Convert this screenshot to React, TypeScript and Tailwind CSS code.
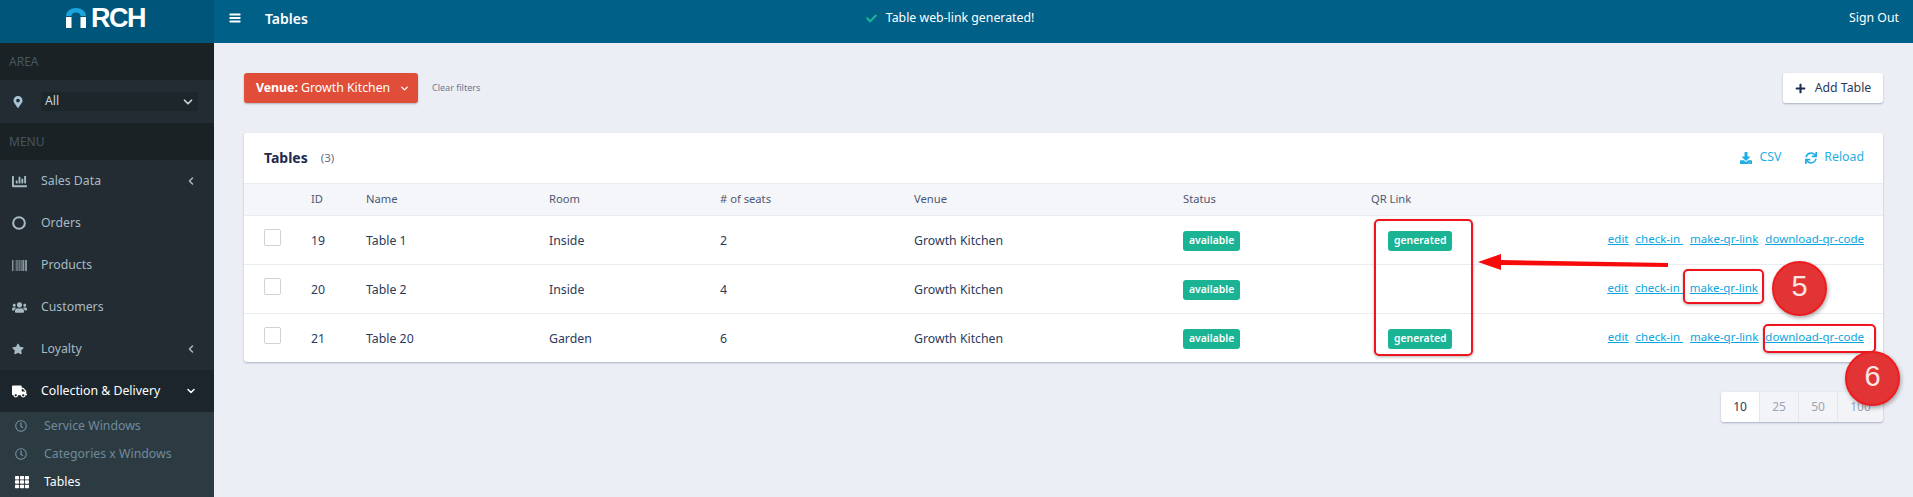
import React from "react";
import { FaMapMarkerAlt, FaChartBar, FaBarcode, FaUsers, FaStar, FaTruck, FaRegClock, FaTh, FaPlus, FaDownload, FaSync, FaCheck } from "react-icons/fa";
import { LuChevronDown, LuChevronLeft, LuCircle, LuMenu } from "react-icons/lu";

const font = "font-['Noto_Sans','Open_Sans',sans-serif]";

function Side({ icon, label, chev, active }: { icon: React.ReactNode; label: string; chev?: "left" | "down"; active?: boolean }) {
  return (
    <div className={`flex h-[42px] items-center pl-3 pr-[17px] text-[12.3px] ${active ? "bg-[#1c252b] text-white" : "text-[#a7bbc6]"}`}>
      <span className="flex w-[29px] shrink-0 items-center text-[15px]">{icon}</span>
      <span className="flex-1">{label}</span>
      {chev === "left" && <LuChevronLeft className="text-[12px]" strokeWidth={3} />}
      {chev === "down" && <LuChevronDown className="text-[12px]" strokeWidth={3} />}
    </div>
  );
}

function Sub({ icon, label, active }: { icon: React.ReactNode; label: string; active?: boolean }) {
  return (
    <div className={`flex h-[28px] items-center pl-[15px] text-[12.3px] ${active ? "text-white" : "text-[#6f8b9a]"}`}>
      <span className="flex w-[29px] shrink-0 items-center text-[12px]">{icon}</span>
      {label}
    </div>
  );
}

const Badge = ({ t }: { t: string }) => (
  <span className="inline-flex h-5 items-center rounded-[3px] bg-[#1ab394] px-[6px] text-[10.4px] font-semibold text-white">{t}</span>
);

const rows = [
  { id: "19", name: "Table 1", room: "Inside", seats: "2", qr: true },
  { id: "20", name: "Table 2", room: "Inside", seats: "4", qr: false },
  { id: "21", name: "Table 20", room: "Garden", seats: "6", qr: true },
];

const grid = "grid grid-cols-[47px_55px_183px_171px_194px_269px_188px_1fr] items-center";

const box = "absolute rounded-[5px] border-2 border-[#f0141e] shadow-[0_1px_3px_rgba(0,0,0,0.3)]";
const dot = "absolute flex h-[55px] w-[55px] items-center justify-center rounded-full border-2 border-[#ee1c20] bg-[#e23434] pb-[4px] font-['Liberation_Sans',sans-serif] text-[29px] text-[#fbe6e6] shadow-[1px_2px_4px_rgba(0,0,0,0.35)]";

function Annotations() {
  return (
    <>
      <div className={`${box} left-[1374px] top-[219px] h-[137px] w-[99px]`} />
      <div className={`${box} left-[1683px] top-[269px] h-[35px] w-[81px]`} />
      <div className={`${box} left-[1763px] top-[324px] h-[29px] w-[113px]`} />
      <svg className="absolute left-[1470px] top-[245px]" width="200" height="32" viewBox="0 0 200 32">
        <path d="M8 17 L31 9 L31 15 L198 18 L198 22 L31 20 L31 25 Z" fill="#f60a0a" />
      </svg>
      <div className={`${dot} left-[1772px] top-[261px]`}>5</div>
      <div className={`${dot} left-[1845px] top-[351px]`}>6</div>
    </>
  );
}

export default function App() {
  return (
    <div className={`${font} relative flex h-[497px] w-[1913px] overflow-hidden bg-[#ebeef4] text-[12.3px] text-[#2b3a5c]`}>
      <aside className="flex w-[214px] shrink-0 flex-col bg-[#222c32]">
        <div className="flex h-[43px] items-center bg-[#00557a] pb-[7px] pl-[66px]">
          <svg width="21" height="20" viewBox="0 0 21 20" className="mr-[4px]">
            <path d="M0 8 A10 8 0 0 1 20 8 L14.5 8 A4.5 3.5 0 0 0 5.5 8 Z" fill="#1aa5dc" />
            <rect x="0" y="9" width="5.5" height="11" fill="#fff" />
            <rect x="14.5" y="9" width="5.5" height="11" fill="#fff" />
          </svg>
          <span className="font-['Liberation_Sans',sans-serif] text-[27px] font-bold leading-none tracking-[-1.5px] text-white">RCH</span>
        </div>
        <div className="flex h-[37px] items-center bg-[#1b2226] px-[9px] text-[12px] text-[#46565f]">AREA</div>
        <div className="flex h-[43px] items-center pl-3 pr-4">
          <span className="flex w-[29px] text-[12px] text-[#a7c4d2]"><FaMapMarkerAlt /></span>
          <div className="flex h-[19px] flex-1 items-center justify-between bg-[#1d262b] pl-1 pr-[3px] text-[12.3px] text-[#c9d6dd]">
            All
            <LuChevronDown className="text-[14px]" strokeWidth={3} />
          </div>
        </div>
        <div className="flex h-[37px] items-center bg-[#1b2226] px-[9px] text-[12px] text-[#46565f]">MENU</div>
        <Side icon={<FaChartBar />} label="Sales Data" chev="left" />
        <Side icon={<LuCircle strokeWidth={3.5} className="text-[14px]" />} label="Orders" />
        <Side icon={<FaBarcode />} label="Products" />
        <Side icon={<FaUsers />} label="Customers" />
        <Side icon={<FaStar className="text-[12px]" />} label="Loyalty" chev="left" />
        <Side icon={<FaTruck />} label="Collection & Delivery" chev="down" active />
        <div className="flex-1 bg-[#2c3a42]">
          <Sub icon={<FaRegClock />} label="Service Windows" />
          <Sub icon={<FaRegClock />} label="Categories x Windows" />
          <Sub icon={<FaTh className="text-[14px]" />} label="Tables" active />
        </div>
      </aside>

      <main className="flex min-w-0 flex-1 flex-col">
        <header className="flex h-[43px] shrink-0 items-center bg-[#006088] pb-[7px] pl-[14px] pr-[14px] text-white">
          <LuMenu className="text-[14px]" strokeWidth={3.5} />
          <span className="ml-[23px] text-[14px] font-semibold">Tables</span>
          <div className="ml-[558px] flex items-center gap-[9px]">
            <FaCheck className="text-[11px] text-[#1ab394]" />
            <span>Table web-link generated!</span>
          </div>
          <span className="ml-auto">Sign Out</span>
        </header>

        <div className="px-[30px] pt-[30px]">
          <div className="flex h-[30px] items-center justify-between">
            <div className="flex items-center gap-[14px]">
              <div className="flex h-[30px] w-[174px] items-center gap-[9px] rounded-[3px] bg-[#e04e3a] pl-3 text-white shadow-[0_1px_2px_rgba(0,0,0,0.25)]">
                <span><b className="font-bold">Venue:</b> Growth Kitchen</span>
                <LuChevronDown className="text-[11px]" strokeWidth={3} />
              </div>
              <span className="text-[9px] text-[#6b7a90]">Clear filters</span>
            </div>
            <div className="flex h-[30px] w-[100px] items-center justify-center gap-[9px] rounded-[3px] bg-white shadow-[0_1px_2px_rgba(40,60,100,0.35)]">
              <FaPlus className="text-[11px] text-[#1e2d55]" />
              <span>Add Table</span>
            </div>
          </div>

          <section className="mt-[30px] rounded-[3px] bg-white shadow-[0_1px_2px_rgba(40,60,100,0.35)]">
            <div className="flex h-[50px] items-center justify-between pb-[1px] pl-5 pr-[19px]">
              <div className="flex items-center gap-[13px]">
                <span className="text-[14px] font-bold text-[#1e2a50]">Tables</span>
                <span className="text-[11.5px] text-[#5f6d85]">(3)</span>
              </div>
              <div className="flex items-center gap-[24px] text-[#1faee3]">
                <span className="flex items-center gap-[7px]"><FaDownload className="text-[12px]" />CSV</span>
                <span className="flex items-center gap-[7px]"><FaSync className="text-[12px]" />Reload</span>
              </div>
            </div>
            <div className={`${grid} h-[33px] border-y border-[#e9ecf1] bg-[#f5f6f9] pl-[20px] text-[11.2px] text-[#4a5873]`}>
              <span />
              <span>ID</span>
              <span>Name</span>
              <span>Room</span>
              <span># of seats</span>
              <span>Venue</span>
              <span>Status</span>
              <span>QR Link</span>
            </div>
            {rows.map((r, i) => (
              <div key={r.id} className={`${grid} pl-[20px] pt-[2px] ${i < 2 ? "h-[49px] border-b border-[#e9ecf1]" : "h-[48px]"}`}>
                <span className="mb-[7px] h-[17px] w-[17px] rounded-[2px] border border-[#cfd2d6] bg-white" />
                <span>{r.id}</span>
                <span>{r.name}</span>
                <span>{r.room}</span>
                <span>{r.seats}</span>
                <span>Growth Kitchen</span>
                <span><Badge t="available" /></span>
                <div className="flex items-center justify-between pr-[19px]">
                  <span className="ml-[17px] flex-none">{r.qr && <Badge t="generated" />}</span>
                  <span className="mb-[5px] flex gap-[7px] text-[11.5px] text-[#0aa5e0] underline">
                    <a>edit</a>
                    <a>{"check-in\u00A0"}</a>
                    <a>make-qr-link</a>
                    <a className={r.qr ? "" : "invisible"}>{r.qr ? "download-qr-code" : ""}<span className={r.qr ? "hidden" : "inline-block w-[99px]"} /></a>
                  </span>
                </div>
              </div>
            ))}
          </section>

          <div className="mt-[30px] flex justify-end">
            <div className="flex h-[30px] rounded-[3px] bg-[#f3f4f7] text-[12px] text-[#9aa4b5] shadow-[0_1px_2px_rgba(40,60,100,0.35)]">
              <span className="flex w-[38px] items-center justify-center rounded-l-[3px] bg-white text-[#2b3a5c]">10</span>
              <span className="flex w-[39px] items-center justify-center border-l border-[#e3e6ec]">25</span>
              <span className="flex w-[39px] items-center justify-center border-l border-[#e3e6ec]">50</span>
              <span className="flex w-[46px] items-center justify-center border-l border-[#e3e6ec]">100</span>
            </div>
          </div>
        </div>
      </main>
      <Annotations />
    </div>
  );
}
